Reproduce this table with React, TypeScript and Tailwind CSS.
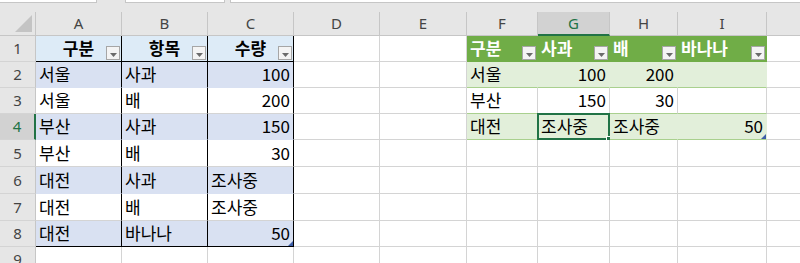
import React from "react";

type CellSpec = {
  text?: string;
  align?: "left" | "right" | "center";
  bold?: boolean;
  color?: string;
  bg?: string;
  br?: string; // right border colour
  bb?: string; // bottom border colour
  filter?: boolean;
  handle?: boolean;
  selected?: boolean;
};

const colWidths = [86, 86, 86, 86, 87, 71, 72, 68, 89, 60];
const colNames = ["A", "B", "C", "D", "E", "F", "G", "H", "I", ""];
const rowHeights = [26, 26, 26, 26, 27, 27, 27, 26, 26];

const GRID = "#d4d4d4";
const BLUE_HEAD = "#ddebf7";
const BLUE_BAND = "#d9e1f2";
const GREEN_HEAD = "#70ad47";
const GREEN_BAND = "#e2efda";
const GREEN_LINE = "#a9d08e";

const FilterButton = () => (
  <div className="absolute right-[1px] bottom-[1px] w-[14px] h-[14px] border border-[#a6a6a6] bg-[#f4f4f4] flex items-center justify-center">
    <svg width="7" height="4" viewBox="0 0 7 4" className="mt-[3px]">
      <path d="M0 0h7L3.5 4z" fill="#6b6b6b" />
    </svg>
  </div>
);

const ResizeHandle = () => (
  <svg width="5" height="5" viewBox="0 0 5 5" className="absolute right-0 bottom-0">
    <path d="M5 0v5H0z" fill="#3e5ea8" />
  </svg>
);

function leftTable(r: number, c: number): CellSpec | null {
  // columns A-C (0..2), rows 1-8 (0..7)
  if (c > 2 || r > 7) return null;
  const data = [
    ["구분", "항목", "수량"],
    ["서울", "사과", "100"],
    ["서울", "배", "200"],
    ["부산", "사과", "150"],
    ["부산", "배", "30"],
    ["대전", "사과", "조사중"],
    ["대전", "배", "조사중"],
    ["대전", "바나나", "50"],
  ];
  const text = data[r][c];
  const isNum = /^\d+$/.test(text);
  if (r === 0) {
    return { text, align: "center", bold: true, bg: BLUE_HEAD, br: "#000", bb: "#000", filter: true };
  }
  const banded = r % 2 === 1;
  return {
    text,
    align: isNum ? "right" : "left",
    bg: banded ? BLUE_BAND : "#fff",
    br: "#000",
    bb: r === 7 ? "#000" : banded ? BLUE_BAND : GRID,
    handle: r === 7 && c === 2,
  };
}

function rightTable(r: number, c: number): CellSpec | null {
  // columns F-I (5..8), rows 1-4 (0..3)
  if (c < 5 || c > 8 || r > 3) return null;
  const data = [
    ["구분", "사과", "배", "바나나"],
    ["서울", "100", "200", ""],
    ["부산", "150", "30", ""],
    ["대전", "조사중", "조사중", "50"],
  ];
  const text = data[r][c - 5];
  const isNum = /^\d+$/.test(text);
  if (r === 0) {
    return { text, align: "left", bold: true, color: "#fff", bg: GREEN_HEAD, br: GREEN_HEAD, bb: GREEN_HEAD, filter: true };
  }
  const banded = r % 2 === 1;
  return {
    text,
    align: isNum ? "right" : "left",
    bg: banded ? GREEN_BAND : "#fff",
    br: banded ? GREEN_BAND : GRID,
    bb: GREEN_LINE,
    handle: r === 3 && c === 8,
    selected: r === 3 && c === 6,
  };
}

function specFor(r: number, c: number): CellSpec {
  return leftTable(r, c) ?? rightTable(r, c) ?? { bg: "#fff", br: GRID, bb: GRID };
}

const Cell = ({ spec, last }: { spec: CellSpec; last: boolean }) => {
  const justify =
    spec.align === "right" ? "justify-end pr-[3px]" : spec.align === "center" ? "justify-center" : "justify-start pl-[3px]";
  return (
    <div
      className={`relative flex items-end pb-[1px] ${justify} border-b ${last ? "" : "border-r"} text-[17px] leading-[24px] font-['Noto_Sans_CJK_KR',sans-serif] whitespace-nowrap`}
      style={{
        background: spec.bg,
        borderRightColor: spec.br,
        borderBottomColor: spec.bb,
        color: spec.color ?? "#000",
        fontWeight: spec.bold ? 700 : 400,
      }}
    >
      <span>{spec.text}</span>
      {spec.filter && <FilterButton />}
      {spec.handle && <ResizeHandle />}
      {spec.selected && (
        <div className="absolute -left-[1px] -top-[1px] -right-[1px] -bottom-[1px] border-2 border-[#217346]">
          <div className="absolute -right-[4px] -bottom-[4px] w-[6px] h-[6px] bg-[#217346] border border-white" />
        </div>
      )}
    </div>
  );
};

export default function App() {
  const template = `36px ${colWidths.map((w) => `${w}px`).join(" ")}`;
  return (
    <div className="w-[800px] h-[263px] overflow-hidden bg-white font-['Noto_Sans',sans-serif]">
      {/* formula bar remnants */}
      <div className="h-[12px] bg-[#e6e6e6] flex items-start">
        <div className="w-[97px] h-[3px] bg-white border-b border-r border-[#c6c6c6]" />
        <div className="w-[100px] h-[3px] ml-[28px] bg-white border-b border-x border-[#c6c6c6]" />
        <div className="flex-1 h-[3px] ml-[5px] bg-white border-b border-l border-[#c6c6c6]" />
      </div>
      <div className="grid" style={{ gridTemplateColumns: template }}>
        {/* corner */}
        <div className="h-[24px] bg-[#e6e6e6] border-r border-b border-[#c6c6c6] relative">
          <svg width="17" height="17" viewBox="0 0 17 17" className="absolute right-[3px] bottom-[3px]">
            <path d="M17 0v17H0z" fill="#c4c4c4" />
          </svg>
        </div>
        {colNames.map((n, i) => (
          <div
            key={n + i}
            className={`h-[24px] flex items-center justify-center text-[15px] border-r border-[#c6c6c6] ${
              i === 6 ? "bg-[#d2d2d2] text-[#217346] border-b-2 border-b-[#217346]" : "bg-[#e6e6e6] text-[#444] border-b border-b-[#c6c6c6]"
            }`}
          >
            {n}
          </div>
        ))}
        {rowHeights.map((h, r) => (
          <React.Fragment key={r}>
            <div
              className={`flex items-center justify-center text-[15px] border-b border-b-[#d4d4d4] ${
                r === 3 ? "bg-[#d2d2d2] text-[#217346] border-r-2 border-r-[#217346]" : "bg-[#e6e6e6] text-[#444] border-r border-r-[#c6c6c6]"
              }`}
              style={{ height: h }}
            >
              {r + 1}
            </div>
            {colNames.map((_, c) => (
              <Cell key={c} spec={specFor(r, c)} last={c === colNames.length - 1} />
            ))}
          </React.Fragment>
        ))}
      </div>
    </div>
  );
}
